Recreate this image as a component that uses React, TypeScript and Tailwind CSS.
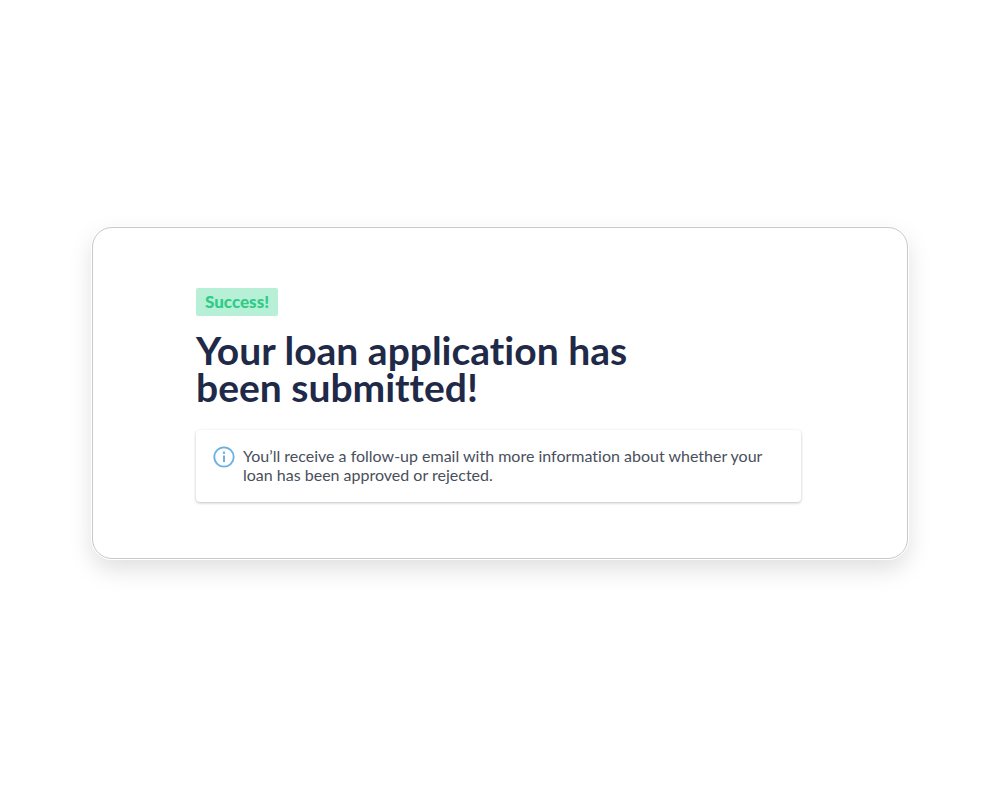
import React from 'react'

const InfoIcon = () => (
  <svg
    viewBox="0 0 22 22"
    className="size-[22px] shrink-0"
    fill="none"
    stroke="#68b1e2"
    aria-hidden="true"
  >
    <circle cx="11" cy="11" r="9.7" strokeWidth="1.8" />
    <path d="M11 9.5v6.5" strokeWidth="2" />
    <circle cx="11" cy="6.8" r="1.2" fill="#68b1e2" stroke="none" />
  </svg>
)

const App = () => {
  return (
    <main className="flex min-h-screen items-center bg-white px-[92px] font-['Lato',sans-serif] [font-variant-ligatures:none]">
      <section className="w-full rounded-[20px] border border-[#c8c8c8] bg-white pt-[60px] pr-[106px] pb-14 pl-[103px] shadow-[0_0_0_1px_#fff,0_10px_24px_rgba(0,0,0,0.13)]">
        <span className="inline-block rounded-xs bg-[#b7f0d6] px-[9px] text-[17px] leading-7 font-black text-[#2fcb88]">
          Success!
        </span>
        <h1 className="mt-4 max-w-[460px] text-[39px] leading-[37px] font-bold text-[#1f2a48]">
          Your loan application has been submitted!
        </h1>
        <div className="mt-6 flex gap-2 rounded-sm bg-white pt-4 pr-4 pb-[18px] pl-[17px] shadow-[0_1px_3px_rgba(0,0,0,0.25)]">
          <InfoIcon />
          <p className="text-base leading-[19px] text-[#494f5c]">
            You’ll receive a follow-up email with more information about whether
            your loan has been approved or rejected.
          </p>
        </div>
      </section>
    </main>
  )
}

export default App
